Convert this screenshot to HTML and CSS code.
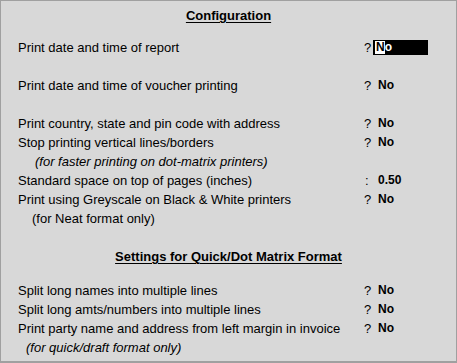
FILE: index.html
```html
<!DOCTYPE html>
<html lang="en">
<head>
  <meta charset="UTF-8">
  <title>Configuration</title>
  <link rel="stylesheet" href="styles.css">
</head>
<body>
  <div class="panel">
    <h2 class="title">Configuration</h2>

    <div class="rows">
      <div class="row">
        <span class="label">Print date and time of report</span>
        <span class="mark">?</span>
        <span class="value selected"><span class="cursor">N</span>o</span>
      </div>
      <div class="row blank"></div>
      <div class="row">
        <span class="label">Print date and time of voucher printing</span>
        <span class="mark">?</span>
        <span class="value">No</span>
      </div>
      <div class="row blank"></div>
      <div class="row">
        <span class="label">Print country, state and pin code with address</span>
        <span class="mark">?</span>
        <span class="value">No</span>
      </div>
      <div class="row">
        <span class="label">Stop printing vertical lines/borders</span>
        <span class="mark">?</span>
        <span class="value">No</span>
      </div>
      <div class="row">
        <span class="label note note-wide">(for faster printing on dot-matrix printers)</span>
      </div>
      <div class="row">
        <span class="label">Standard space on top of pages (inches)</span>
        <span class="mark colon">:</span>
        <span class="value">0.50</span>
      </div>
      <div class="row">
        <span class="label">Print using Greyscale on Black &amp; White printers</span>
        <span class="mark">?</span>
        <span class="value">No</span>
      </div>
      <div class="row">
        <span class="label plain-note">(for Neat format only)</span>
      </div>
      <div class="row blank"></div>
    </div>

    <h2 class="title title-second">Settings for Quick/Dot Matrix Format</h2>

    <div class="rows">
      <div class="row">
        <span class="label">Split long names into multiple lines</span>
        <span class="mark">?</span>
        <span class="value">No</span>
      </div>
      <div class="row">
        <span class="label">Split long amts/numbers into multiple lines</span>
        <span class="mark">?</span>
        <span class="value">No</span>
      </div>
      <div class="row">
        <span class="label">Print party name and address from left margin in invoice</span>
        <span class="mark">?</span>
        <span class="value">No</span>
      </div>
      <div class="row">
        <span class="label note">(for quick/draft format only)</span>
      </div>
    </div>
  </div>
</body>
</html>
```

FILE: styles.css
```css
body {
  margin: 0;
  padding: 0;
  font-family: "Liberation Sans", Arial, sans-serif;
  color: #000;
  background: #d8d8d8;
}
.panel {
  box-sizing: border-box;
  width: 457px;
  height: 363px;
  background: #d8d8d8;
  border: 1px solid #a0a0a0;
  border-bottom-width: 2px;
  padding: 5px 0 0 17px;
}
.title {
  margin: 0;
  padding-right: 17px;
  font-size: 13px;
  font-weight: bold;
  line-height: 19px;
  text-align: center;
  text-decoration: underline;
  text-underline-offset: 2px;
}
.panel > .title:first-child {
  margin-bottom: 13px;
}
.title-second {
  margin-bottom: 15px;
}
.row {
  display: flex;
  align-items: center;
  height: 19px;
  font-size: 13px;
}
.label {
  width: 346px;
  white-space: nowrap;
}
.note {
  font-style: italic;
  padding-left: 8px;
}
.note-wide {
  padding-left: 17px;
}
.plain-note {
  padding-left: 14px;
}
.mark {
  width: 9px;
}
.colon {
  padding-left: 1px;
  width: 8px;
}
.value {
  display: inline-block;
  padding-left: 5px;
  font-size: 12px;
  font-weight: bold;
  line-height: 15px;
}
.value.selected {
  box-sizing: border-box;
  width: 55px;
  height: 15px;
  padding-left: 2px;
  background: #000;
  color: #fff;
}
.cursor {
  display: inline-block;
  background: #fff;
  color: #000;
  padding: 0 0 0 1px;
  line-height: 13px;
}
```
